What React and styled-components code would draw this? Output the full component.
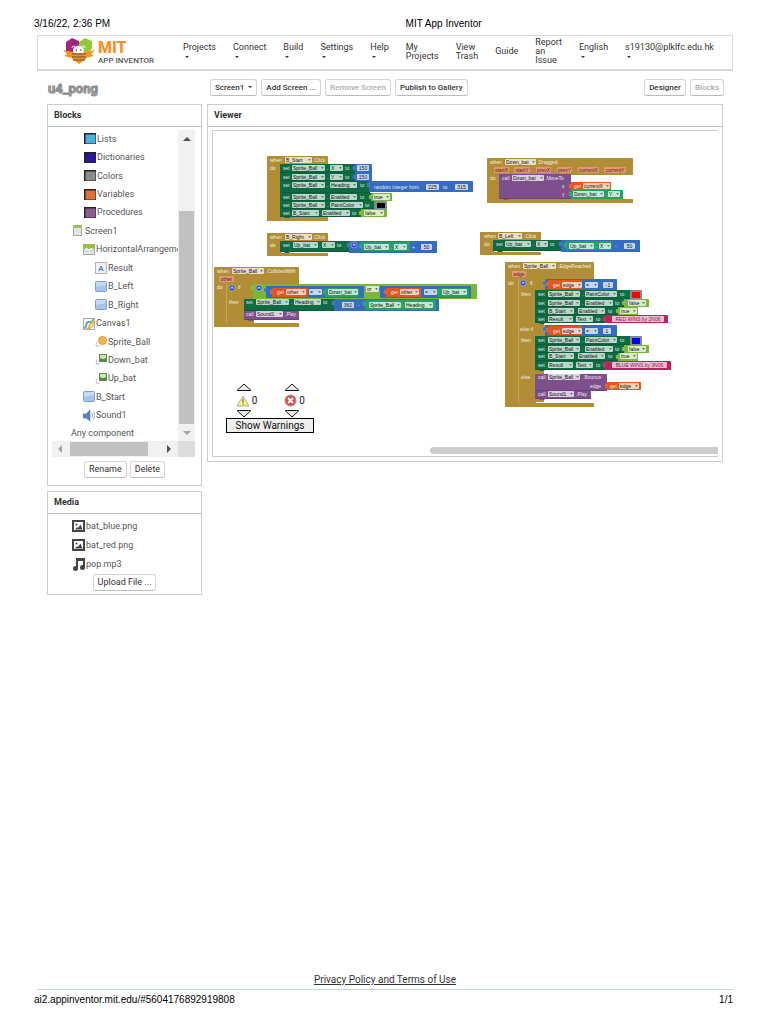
import React from "react";
import styled, { createGlobalStyle } from "styled-components";

const GlobalStyle = createGlobalStyle`
  * {
    box-sizing: border-box;
  }
  body {
    margin: 0;
    background: #fff;
    color: #333;
    font: 9px/11px Roboto, sans-serif;
  }
  button {
    font-family: inherit;
    cursor: pointer;
  }
`;

const Sheet = styled.div`
  min-height: 100vh;
  display: flex;
  flex-direction: column;
  padding: 18px 35px 18px 34px;
`;
const PrintLine = styled.div`
  display: flex;
  justify-content: space-between;
  color: #000;
  font: 10px/12px "Liberation Sans", sans-serif;
`;
const PrintTitle = styled.span`
  flex: 1;
  padding-left: 44px;
  text-align: center;
`;
const Page = styled.div`
  flex: 1;
  display: flex;
  flex-direction: column;
  margin-left: 3px;
`;

/* top bar */
const TopBar = styled.header`
  display: flex;
  align-items: center;
  height: 36px;
  margin-top: 5px;
  padding: 0 0 2px 25px;
  border: 1px solid #d8d8d8;
  border-bottom-width: 2px;
`;
const Logo = styled.svg`
  width: 92px;
  height: 30px;
  margin-right: 28px;
  flex: none;
`;
const Menu = styled.nav`
  display: flex;
  align-items: center;
  gap: 17px;
`;
const MenuLink = styled.a`
  color: #333;
  line-height: 9px;
  text-decoration: none;
  white-space: pre-line;
`;
const Caret = styled.span`
  display: inline-block;
  border: solid transparent;
  border-width: 2px 2px 0;
  border-top-color: #333;
  vertical-align: middle;
`;
const MenuCaret = styled(Caret)`
  display: block;
  width: 4px;
  margin: 4px 0 2px 2px;
`;

/* project bar */
const ProjectBar = styled.div`
  display: flex;
  align-items: center;
  gap: 4px;
  height: 33px;
  padding: 0 9px 1px 11px;
`;
const ProjectName = styled.h1`
  width: 158px;
  margin: 4px 0 0;
  color: #aaa;
  font-size: 13px;
  line-height: 16px;
  -webkit-text-stroke: 1px #8c8c8c;
`;
const Button = styled.button`
  height: 17px;
  padding: 0 4px;
  border: 1px solid #d4d4d4;
  border-bottom-color: #bbb;
  border-radius: 3px;
  background: #fff;
  color: ${(props) => (props.disabled ? "#aaa" : "#333")};
  font-size: ${(props) => props.$size || 8}px;
  font-weight: ${(props) => (props.$size ? 400 : 500)};
  line-height: 13px;
  white-space: nowrap;

  ${Caret} {
    margin-left: 2px;
  }
`;
const Spacer = styled.div`
  flex: 1;
`;

/* panels */
const Columns = styled.main`
  display: grid;
  grid-template-columns: 155px minmax(0, 1fr);
  align-items: start;
  gap: 5px;
  padding: 0 10px;
`;
const Side = styled.div`
  display: grid;
  gap: 5px;
`;
const Panel = styled.section`
  min-width: 0;
  border: 1px solid #ccc;
`;
const PanelTitle = styled.h2`
  margin: 0;
  padding: 4px 6px 5px;
  border-bottom: 1px solid #bbb;
  font-size: 9px;
  line-height: 12px;
`;
const Scroller = styled.div`
  display: grid;
  grid-template-columns: minmax(0, 1fr) 17px;
  margin: 3px 6px 4px 4px;
`;
const Tree = styled.ul`
  display: grid;
  grid-template-rows: repeat(16, 1fr) 16px;
  height: 311px;
  margin: 0;
  padding: 0;
  list-style: none;
`;
const TreeRow = styled.li`
  display: flex;
  align-items: center;
  gap: 1px;
  padding-left: ${(props) => props.$indent}px;
  color: #555;
  white-space: nowrap;

  svg {
    flex: none;
  }
`;
const TrackV = styled.div`
  display: flex;
  flex-direction: column;
  align-items: center;
  justify-content: space-between;
  padding: 5px 0 4px;
  background: #f1f1f1;
`;
const ThumbV = styled.div`
  width: 15px;
  height: 213px;
  margin: 62px 0 0;
  background: #c1c1c1;
`;
const TrackH = styled.div`
  display: flex;
  align-items: center;
  height: 16px;
  padding: 0 4px;
  background: #f1f1f1;
`;
const ThumbH = styled.div`
  width: 78px;
  height: 14px;
  margin: 0 17px 0 6px;
  background: #c1c1c1;
`;
const Corner = styled.div`
  background: #dcdcdc;
`;
const ButtonRow = styled.div`
  display: flex;
  justify-content: center;
  gap: 3px;
  padding-bottom: ${(props) => props.$bottom}px;
`;
const MediaList = styled.ul`
  display: grid;
  grid-auto-rows: 19px;
  margin: 0;
  padding: 3px 0 0;
  list-style: none;
`;

/* viewer */
const Workspace = styled.div`
  position: relative;
  height: 327px;
  margin: 3px 4px 4px;
  border: 1px solid #ccc;
  border-right: 0;
  overflow: hidden;
`;
const Canvas = styled.svg`
  display: block;
  width: 505px;
  height: 325px;
  font-family: "Liberation Sans", sans-serif;
  font-size: 5px;
`;
const Warnings = styled.div`
  position: absolute;
  left: 13px;
  bottom: 23px;
  width: 88px;
`;
const Counters = styled.div`
  display: grid;
  grid-template-columns: 36px 36px;
  column-gap: 12px;
`;
const Counter = styled.div`
  display: grid;
  justify-items: center;
  color: #222;
`;
const Count = styled.div`
  display: flex;
  align-items: center;
  gap: 2px;
  height: 19px;
  padding-left: 5px;
  font-size: 10px;
`;
const StepButton = styled.button`
  display: block;
  height: 8px;
  padding: 0;
  border: 0;
  background: none;

  svg {
    display: block;
  }
`;
const ShowButton = styled.button`
  width: 100%;
  height: 15px;
  padding: 0;
  border: 1px solid #000;
  background: #eee;
  color: #111;
  font-size: 10px;
  line-height: 12px;
`;
const WorkspaceBar = styled.div`
  position: absolute;
  right: 0;
  bottom: 2px;
  width: 57%;
  height: 7px;
  border-radius: 4px 0 0 4px;
  background: #ccc;
`;

const Footer = styled.footer`
  margin-top: auto;
  padding-bottom: 4px;
  border-bottom: 1px solid #c3d0f5;
  font-size: 10px;
  text-align: center;

  a {
    color: #333;
  }
`;
const PrintFooter = styled(PrintLine)`
  margin-top: 4px;
`;

const menu = [
  ["Projects", true],
  ["Connect", true],
  ["Build", true],
  ["Settings", true],
  ["Help", true],
  ["My\nProjects"],
  ["View\nTrash"],
  ["Guide"],
  ["Report\nan\nIssue"],
  ["English", true],
  ["s19130@plklfc.edu.hk", true],
];

const tree = [
  ["Lists", 32, "#4ab0dc"],
  ["Dictionaries", 32, "#2d1799"],
  ["Colors", 32, "#8c8c8c"],
  ["Variables", 32, "#dd7035"],
  ["Procedures", 32, "#8b5f96"],
  ["Screen1", 20, "screen"],
  ["HorizontalArrangeme", 31, "arrangement"],
  ["Result", 43, "label"],
  ["B_Left", 43, "button"],
  ["B_Right", 43, "button"],
  ["Canvas1", 31, "canvas"],
  ["Sprite_Ball", 43, "ball"],
  ["Down_bat", 43, "sprite"],
  ["Up_bat", 43, "sprite"],
  ["B_Start", 31, "button"],
  ["Sound1", 31, "sound"],
  ["Any component", 19, null],
];

const media = [
  ["bat_blue.png", "picture"],
  ["bat_red.png", "picture"],
  ["pop.mp3", "note"],
];

const glyphs = {
  screen: (
    <>
      <rect x="1.5" y=".5" width="8" height="10" fill="#e4e4e4" stroke="#aaa" />
      <path d="M1 0h9v3H1z" fill="#9fc54d" />
    </>
  ),
  arrangement: (
    <>
      <rect x=".5" y=".5" width="11" height="10" fill="#e4e8df" stroke="#aaa" />
      <path d="M0 0h12v5H0z" fill="#94c23c" />
      <path d="M2 4h3v3H2zM7 4h3v3H7z" fill="#fff" stroke="#a9b89b" strokeWidth=".6" />
      <path d="M5 5.500h2" stroke="#fff" />
    </>
  ),
  label: (
    <>
      <rect x=".5" y=".5" width="11" height="11" fill="#f0f0f0" stroke="#b4b4b4" />
      <text x="6" y="9" textAnchor="middle" fontSize="8" fontWeight="700" fill="#4f86c9">A</text>
    </>
  ),
  button: (
    <>
      <rect x=".5" y=".5" width="11" height="10" rx="1" fill="#a5c3ec" stroke="#7d9fce" />
      <path d="M1 1h10v3L1 6z" fill="#c6daf5" />
    </>
  ),
  canvas: (
    <>
      <rect x=".5" y=".5" width="11" height="11" fill="#fff" stroke="#aaa" />
      <path d="M1 10C5 9 2 3 6 4s3-2 5-3" fill="none" stroke="#5aa5da" strokeWidth="2" />
      <path d="M3 11c5 0 2-4 5-5s2-3 4-4" fill="none" stroke="#f2b52c" strokeWidth="2" />
      <path d="M6 11c3-1 2-3 5-4" fill="none" stroke="#75ad3e" />
    </>
  ),
  ball: (
    <>
      <circle cx="7.500" cy="4.500" r="4" fill="#f6b545" stroke="#d9983c" />
      <path d="M1 6c2 0 0 2 0 3s2 0 1 2M4 9l-1 2" fill="none" stroke="#999" strokeWidth=".7" />
    </>
  ),
  sprite: (
    <>
      <rect x="4.500" y=".5" width="7" height="7" fill="#c3eda3" stroke="#777" />
      <path d="M5 7V4l2 1 2 0 2-1v3z" fill="#3f9a1c" />
      <path d="M1 6c2 0 0 2 0 3s2 0 1 2M4 9l-1 2" fill="none" stroke="#999" strokeWidth=".7" />
    </>
  ),
  sound: (
    <>
      <path d="M0 4h3l4-4v11L3 8H0z" fill="#5584c4" stroke="#41689f" strokeWidth=".5" />
      <path d="M9 3q1.500 2.500 0 5M10.500 1.500q3 4 0 8" fill="none" stroke="#999" strokeWidth=".8" />
    </>
  ),
};

function TreeIcon({ kind }) {
  if (!kind) return null;
  return (
    <svg width="12" height="12" viewBox="0 0 12 12">
      {glyphs[kind] || (
        <>
          <rect width="12" height="11" fill="#222" />
          <rect x="1.500" y="1.500" width="10" height="9" fill={kind} />
        </>
      )}
    </svg>
  );
}

function MediaIcon({ kind }) {
  return (
    <svg width="13" height="14" viewBox="0 0 13 14">
      {kind === "picture" ? (
        <>
          <rect x="1" y="1" width="11" height="10" fill="#fff" stroke="#444" strokeWidth="2" />
          <path d="M3 9.500l2-2.500 1 1 2.500-3.500 2 5z" fill="#444" />
          <circle cx="4.500" cy="4.500" r="1" fill="#444" />
        </>
      ) : (
        <>
          <path d="M4 0h9v10H11V3H6v8H4z" fill="#444" />
          <circle cx="3.500" cy="10.500" r="2.500" fill="#444" />
          <circle cx="10.500" cy="9.500" r="2.500" fill="#444" />
        </>
      )}
    </svg>
  );
}

const GOLD = "#b18e35";
const GREEN = "#0e6b43";
const BLUE = "#346cc0";
const LIME = "#7ab63c";
const TEAL = "#26a166";
const ORANGE = "#e2571f";
const PURPLE = "#7d4f8d";
const PINK = "#c0225f";
const PALE = "#e2977b";

// shapes: [colour, x, y, width, height]
// texts: [y, [text, x], [text, x, field width], [text, x, field width, kind]]
// kinds: "n" number, "p" event parameter, "t" string
const stacks = [
  {
    shapes: [
      [GOLD, 267, 156, 61, 10], [GOLD, 267, 158, 14, 63], [GOLD, 267, 217, 61, 4],
      [GREEN, 280, 164, 76, 9], [BLUE, 355, 164, 17, 9],
      [GREEN, 280, 173, 76, 8], [BLUE, 355, 173, 17, 8],
      [GREEN, 280, 181, 90, 12], [BLUE, 369, 181, 104, 11],
      [GREEN, 280, 193, 92, 8], [LIME, 371, 193, 21, 8],
      [GREEN, 280, 201, 95, 8], ["#888", 374, 201, 13, 8], ["#000", 377, 203, 8, 5],
      [GREEN, 280, 209, 82, 8], [LIME, 361, 209, 26, 8],
    ],
    texts: [
      [160, ["when", 270], ["B_Start", 285, 27], [".Click", 313]],
      [168, ["do", 270], ["set", 283], ["Sprite_Ball", 292, 33], [".", 327], ["X", 330, 13], ["to", 345], ["150", 357, 12, "n"]],
      [177, ["set", 283], ["Sprite_Ball", 292, 33], [".", 327], ["Y", 330, 13], ["to", 345], ["150", 357, 12, "n"]],
      [185, ["set", 283], ["Sprite_Ball", 292, 33], [".", 327], ["Heading", 330, 27], ["to", 360]],
      [187, ["random integer from", 374], ["225", 426, 13, "n"], ["to", 443], ["315", 455, 13, "n"]],
      [197, ["set", 283], ["Sprite_Ball", 292, 33], [".", 327], ["Enabled", 330, 27], ["to", 360], ["true", 373, 17]],
      [205, ["set", 283], ["Sprite_Ball", 292, 33], [".", 327], ["PaintColor", 330, 33], ["to", 365]],
      [213, ["set", 283], ["B_Start", 292, 27], [".", 320], ["Enabled", 322, 28], ["to", 352], ["false", 364, 20]],
    ],
  },
  {
    shapes: [
      [GOLD, 267, 233, 61, 9], [GOLD, 267, 235, 14, 21], [GOLD, 267, 253, 61, 3],
      [GREEN, 280, 241, 70, 11], [BLUE, 349, 241, 88, 12], [TEAL, 361, 242, 49, 9],
    ],
    dots: [[354, 245]],
    texts: [
      [237, ["when", 270], ["B_Right", 285, 27], [".Click", 313]],
      [245, ["do", 270], ["set", 283], ["Up_bat", 293, 25], [".", 319], ["X", 322, 13], ["to", 337]],
      [247, ["Up_bat", 364, 25], [".", 391], ["X", 394, 13], ["+", 412], ["50", 421, 11, "n"]],
    ],
  },
  {
    shapes: [
      [GOLD, 487, 158, 146, 17], [GOLD, 487, 160, 13, 43], [GOLD, 487, 199, 146, 4],
      [PURPLE, 499, 174, 72, 25], [ORANGE, 571, 182, 40, 8], [TEAL, 571, 190, 52, 9],
    ],
    texts: [
      [162, ["when", 490], ["Down_bat", 505, 31], [".Dragged", 537]],
      [170, ["startX", 494, 15, "p"], ["startY", 514, 16, "p"], ["prevX", 536, 15, "p"], ["prevY", 557, 15, "p"], ["currentX", 578, 21, "p"], ["currentY", 604, 22, "p"]],
      [178, ["do", 490], ["call", 502], ["Down_bat", 512, 32], [".MoveTo", 545]],
      [186, ["x", 562], ["get", 574], ["currentX", 583, 27]],
      [194, ["y", 562], ["Down_bat", 573, 31], [".", 605], ["Y", 608, 12]],
    ],
  },
  {
    shapes: [
      [GOLD, 480, 232, 61, 9], [GOLD, 480, 234, 14, 21], [GOLD, 480, 252, 61, 3],
      [GREEN, 493, 240, 69, 11], [BLUE, 561, 240, 79, 12], [TEAL, 566, 241, 46, 9],
    ],
    texts: [
      [236, ["when", 484], ["B_Left", 498, 24], [".Click", 524]],
      [244, ["do", 484], ["set", 496], ["Up_bat", 505, 26], [".", 533], ["X", 536, 12], ["to", 550]],
      [246, ["Up_bat", 569, 25], [".", 596], ["X", 599, 12], ["-", 615], ["50", 624, 11, "n"]],
    ],
  },
  {
    shapes: [
      [GOLD, 214, 267, 85, 17], [GOLD, 214, 269, 40, 58], ["#c5a55a", 226, 283, 1, 41],
      [GOLD, 227, 283, 26, 40], [GOLD, 244, 320, 9, 3], [GOLD, 214, 323, 85, 4],
      [LIME, 253, 284, 224, 15], [BLUE, 266, 286, 98, 12], [ORANGE, 272, 288, 36, 9], [TEAL, 325, 288, 34, 9],
      [BLUE, 380, 286, 91, 12], [ORANGE, 386, 288, 35, 9], [TEAL, 438, 288, 31, 9],
      [GREEN, 244, 299, 91, 12], [BLUE, 334, 299, 105, 12], [TEAL, 365, 300, 71, 10],
      [PURPLE, 244, 311, 55, 9],
    ],
    dots: [[232, 288], [259, 288]],
    texts: [
      [271, ["when", 217], ["Sprite_Ball", 232, 32], [".CollidedWith", 266]],
      [279, ["other", 219, 15, "p"]],
      [287, ["do", 217], ["if", 238]],
      [292, ["get", 277], ["other", 286, 20], ["=", 309, 13], ["Down_bat", 328, 30]],
      [289, ["or", 366, 13]],
      [292, ["get", 391], ["other", 400, 19], ["=", 424, 13], ["Up_bat", 442, 25]],
      [302, ["then", 229], ["set", 246], ["Sprite_Ball", 256, 33], [".", 291], ["Heading", 294, 27], ["to", 323]],
      [305, ["360", 342, 12, "n"], ["-", 358], ["Sprite_Ball", 369, 32], [".", 402], ["Heading", 405, 28]],
      [314, ["call", 246], ["Sound1", 256, 27], [".Play", 285]],
    ],
  },
  {
    shapes: [
      [GOLD, 505, 262, 89, 18], [GOLD, 505, 264, 31, 143], ["#c5a55a", 518, 279, 1, 124],
      [GOLD, 519, 280, 16, 123], [GOLD, 519, 279, 27, 11], [GOLD, 519, 323, 25, 3], [GOLD, 519, 325, 27, 11],
      [GOLD, 519, 370, 25, 4], [GOLD, 519, 399, 25, 3], [GOLD, 505, 403, 89, 4],
      [BLUE, 545, 279, 72, 11], [ORANGE, 548, 280, 34, 9],
      [GREEN, 535, 290, 96, 9], ["#888", 630, 290, 12, 9], ["#f00", 632, 292, 8, 6],
      [GREEN, 535, 299, 91, 8], [LIME, 624, 299, 25, 8],
      [GREEN, 535, 307, 84, 8], [LIME, 618, 307, 20, 8],
      [GREEN, 535, 315, 72, 8], [PINK, 605, 315, 63, 8],
      [BLUE, 545, 325, 72, 11], [ORANGE, 548, 326, 34, 9],
      [GREEN, 535, 336, 96, 9], ["#888", 630, 336, 12, 9], ["#00f", 632, 338, 8, 6],
      [GREEN, 535, 345, 91, 8], [LIME, 624, 345, 25, 8],
      [GREEN, 535, 353, 84, 8], [LIME, 618, 353, 20, 8],
      [GREEN, 535, 361, 72, 9], [PINK, 605, 361, 66, 9],
      [PURPLE, 535, 374, 72, 17], [PURPLE, 535, 391, 56, 8], [ORANGE, 607, 382, 34, 8],
    ],
    dots: [[523, 283]],
    texts: [
      [266, ["when", 508], ["Sprite_Ball", 523, 33], [".EdgeReached", 558]],
      [274, ["edge", 512, 14, "p"]],
      [283, ["do", 508], ["if", 530]],
      [285, ["get", 553], ["edge", 562, 20], ["=", 585, 13], ["-1", 603, 10, "n"]],
      [294, ["then", 521], ["set", 538], ["Sprite_Ball", 548, 32], [".", 582], ["PaintColor", 585, 32], ["to", 620]],
      [303, ["set", 538], ["Sprite_Ball", 548, 32], [".", 582], ["Enabled", 585, 28], ["to", 615], ["false", 628, 18]],
      [311, ["set", 538], ["B_Start", 548, 26], [".", 575], ["Enabled", 578, 27], ["to", 608], ["true", 620, 17]],
      [319, ["set", 538], ["Result", 548, 25], [".", 574], ["Text", 576, 17], ["to", 596], ["RED WINS by 2N06", 612, 52, "t"]],
      [329, ["else if", 520]],
      [331, ["get", 553], ["edge", 562, 20], ["=", 585, 13], ["1", 603, 8, "n"]],
      [340, ["then", 521], ["set", 538], ["Sprite_Ball", 548, 32], [".", 582], ["PaintColor", 585, 32], ["to", 620]],
      [349, ["set", 538], ["Sprite_Ball", 548, 32], [".", 582], ["Enabled", 585, 28], ["to", 615], ["false", 628, 18]],
      [356, ["set", 538], ["B_Start", 548, 26], [".", 575], ["Enabled", 578, 27], ["to", 608], ["true", 620, 17]],
      [365, ["set", 538], ["Result", 548, 25], [".", 574], ["Text", 576, 17], ["to", 596], ["BLUE WINS by 3N06", 612, 55, "t"]],
      [377, ["else", 521], ["call", 538], ["Sprite_Ball", 548, 32], [".Bounce", 583]],
      [386, ["edge", 590], ["get", 610], ["edge", 619, 20]],
      [394, ["call", 538], ["Sound1", 548, 26], [".Play", 576]],
    ],
  },
];

const fieldInk = { p: "#5a1c0c", t: "#8f0f40" };

function Field({ text, x, y, width, kind }) {
  if (!width) {
    return <text x={x} y={y + 2} fill="#fff" fillOpacity=".9">{text}</text>;
  }
  const arrow = !kind;
  return (
    <>
      <rect x={x} y={y - 3} width={width} height="6" rx="1" fill={kind === "p" ? PALE : "#fff"} fillOpacity={kind === "p" ? 1 : 0.72} />
      <text x={arrow ? x + 1 : x + width / 2} y={y + 2} textAnchor={arrow ? "start" : "middle"} fill={fieldInk[kind] || "#111"}>
        {text}
      </text>
      {arrow && <path d={`M${x + width - 4} ${y - 1}h3l-1.500 2z`} fill="#777" />}
    </>
  );
}

function Stack({ shapes, texts, dots = [] }) {
  return (
    <g>
      {shapes.map(([fill, x, y, width, height], i) => (
        <g key={i}>
          <rect x={x} y={y} width={width} height={height} rx=".6" fill={fill} />
          {(fill === GREEN || fill === PURPLE) && (
            <>
              <path d={`M${x} ${y + height - 0.5}h${width}`} stroke="#000" strokeOpacity=".25" strokeWidth=".6" />
              <path d={`M${x + 4} ${y + height}h6l-1 1h-4z`} fill={fill} />
            </>
          )}
          {[BLUE, LIME, TEAL, ORANGE, PINK].includes(fill) && (
            <path d={`M${x} ${y + 2}l-2 .5v3l2 .5z`} fill={fill} stroke="#fff" strokeOpacity=".3" strokeWidth=".4" />
          )}
        </g>
      ))}
      {dots.map(([x, y]) => (
        <g key={x}>
          <circle cx={x} cy={y} r="3" fill="#2f47b8" stroke="#b9c3ee" strokeWidth=".6" />
          <path d={`M${x - 1.5} ${y}h3M${x} ${y - 1.5}v1.500`} stroke="#fff" strokeWidth=".8" />
        </g>
      ))}
      {texts.map(([y, ...cells]) =>
        cells.map(([text, x, width, kind]) => (
          <Field key={`${x}-${y}`} text={text} x={x} y={y} width={width} kind={kind} />
        ))
      )}
    </g>
  );
}

function Arrow({ d, color = "#505050" }) {
  return (
    <svg width="8" height="8" viewBox="0 0 8 8">
      <path d={d} fill={color} />
    </svg>
  );
}

function Step({ up, label }) {
  return (
    <StepButton aria-label={label}>
      <svg width="16" height="8" viewBox="0 0 16 8">
        <path d={up ? "M1 7.500L8 1l7 6.500z" : "M1 .5L8 7l7-6.500z"} fill="#e8e8e8" stroke="#111" />
      </svg>
    </StepButton>
  );
}

function AppLogo() {
  return (
    <Logo viewBox="0 0 92 30" fontFamily="Roboto, sans-serif">
      <path d="M3 5l6-4 7 3v8l-6 5-7-3z" fill="#a32482" />
      <path d="M16 5l6-4 7 3v8l-6 5-7-3z" fill="#95c93d" />
      <path d="M0 13l10 2-1 6-8-2 3-2zM32 13l-11 2 1 6 9-2-3-2z" fill="#f7941e" />
      <circle cx="15.500" cy="14" r="5.500" fill="#fff" />
      <path d="M12 10q-3-2-3 1M19 10q3-2 3 1" fill="none" stroke="#fff" />
      <circle cx="13.500" cy="13" r=".8" fill="#444" />
      <circle cx="17.500" cy="13" r=".8" fill="#444" />
      <path d="M9 16h14v6l-7 5-7-5z" fill="#f7941e" />
      <path d="M9 17h14M9 20h14M10 23h12" stroke="#5b5146" />
      <text x="35" y="16" fontSize="16" fontWeight="800" fill="#f7901e">MIT</text>
      <text x="35" y="26" fontSize="8" fontWeight="500" fill="#555">APP INVENTOR</text>
    </Logo>
  );
}

export default function App() {
  return (
    <>
      <GlobalStyle />
      <Sheet>
        <PrintLine>
          <span>3/16/22, 2:36 PM</span>
          <PrintTitle>MIT App Inventor</PrintTitle>
        </PrintLine>

        <Page>
          <TopBar>
            <AppLogo />
            <Menu>
              {menu.map(([label, drop]) => (
                <MenuLink key={label} href="#">
                  {label}
                  {drop && <MenuCaret />}
                </MenuLink>
              ))}
            </Menu>
          </TopBar>

          <ProjectBar>
            <ProjectName>u4_pong</ProjectName>
            <Button>Screen1 <Caret /></Button>
            <Button>Add Screen ...</Button>
            <Button disabled>Remove Screen</Button>
            <Button>Publish to Gallery</Button>
            <Spacer />
            <Button>Designer</Button>
            <Button disabled>Blocks</Button>
          </ProjectBar>

          <Columns>
            <Side>
              <Panel>
                <PanelTitle>Blocks</PanelTitle>
                <Scroller>
                  <Tree>
                    {tree.map(([label, indent, kind]) => (
                      <TreeRow key={label} $indent={indent}>
                        <TreeIcon kind={kind} />
                        {label}
                      </TreeRow>
                    ))}
                  </Tree>
                  <TrackV>
                    <Arrow d="M0 6l4-4 4 4z" />
                    <ThumbV />
                    <Arrow d="M0 2l4 4 4-4z" color="#a3a3a3" />
                  </TrackV>
                  <TrackH>
                    <Arrow d="M2 4l4-4v8z" color="#a3a3a3" />
                    <ThumbH />
                    <Arrow d="M6 4L2 0v8z" />
                  </TrackH>
                  <Corner />
                </Scroller>
                <ButtonRow $bottom={7}>
                  <Button $size={9}>Rename</Button>
                  <Button $size={9}>Delete</Button>
                </ButtonRow>
              </Panel>

              <Panel>
                <PanelTitle>Media</PanelTitle>
                <MediaList>
                  {media.map(([name, kind]) => (
                    <TreeRow key={name} $indent={24}>
                      <MediaIcon kind={kind} />
                      {name}
                    </TreeRow>
                  ))}
                </MediaList>
                <ButtonRow $bottom={3}>
                  <Button $size={9}>Upload File ...</Button>
                </ButtonRow>
              </Panel>
            </Side>

            <Panel>
              <PanelTitle>Viewer</PanelTitle>
              <Workspace>
                <Canvas viewBox="213 131 505 325">
                  {stacks.map((stack, i) => (
                    <Stack key={i} {...stack} />
                  ))}
                </Canvas>
                <Warnings>
                  <Counters>
                    <Counter>
                      <Step up label="Previous warning" />
                      <Count>
                        <svg width="14" height="12" viewBox="0 0 14 12">
                          <path d="M7 1l6 10H1z" fill="#fbf37a" stroke="#aaa" strokeLinejoin="round" />
                          <path d="M7 4v4M7 9v1" stroke="#555" />
                        </svg>
                        0
                      </Count>
                      <Step label="Next warning" />
                    </Counter>
                    <Counter>
                      <Step up label="Previous error" />
                      <Count>
                        <svg width="13" height="13" viewBox="0 0 13 13">
                          <circle cx="6.500" cy="6.500" r="5.500" fill="#e04848" stroke="#999" />
                          <path d="M4 4l5 5M9 4L4 9" stroke="#fff" strokeWidth="1.800" />
                        </svg>
                        0
                      </Count>
                      <Step label="Next error" />
                    </Counter>
                  </Counters>
                  <ShowButton>Show Warnings</ShowButton>
                </Warnings>
                <WorkspaceBar />
              </Workspace>
            </Panel>
          </Columns>

          <Footer>
            <a href="#">Privacy Policy and Terms of Use</a>
          </Footer>
        </Page>

        <PrintFooter>
          <span>ai2.appinventor.mit.edu/#5604176892919808</span>
          <span>1/1</span>
        </PrintFooter>
      </Sheet>
    </>
  );
}
